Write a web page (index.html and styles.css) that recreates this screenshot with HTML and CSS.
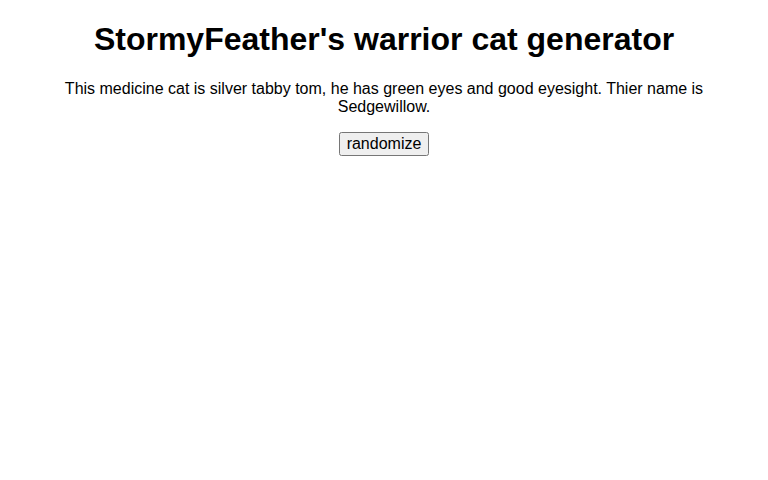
FILE: index.html
```html
<!DOCTYPE html>
<html>
<head>
<meta charset="utf-8">
<link rel="stylesheet" href="styles.css">
</head>
<body class="page">
<h1 class="title">StormyFeather's warrior cat generator</h1>
<p class="desc">This medicine cat is silver tabby tom, he has green eyes and good eyesight. Thier name is Sedgewillow.</p>
<button class="btn">randomize</button>
</body>
</html>
```
FILE: styles.css
```css
.page {
  font-family: "Liberation Sans", Arial, sans-serif;
  text-align: center;
  margin: 0;
}
.title {
  font-size: 32px;
  margin: 21.44px 0 22px;
}
.desc {
  font-size: 16px;
  max-width: 680px;
  margin: 16px auto;
}
.btn {
  font-family: "Liberation Sans", Arial, sans-serif;
  font-size: 16px;
}
```
